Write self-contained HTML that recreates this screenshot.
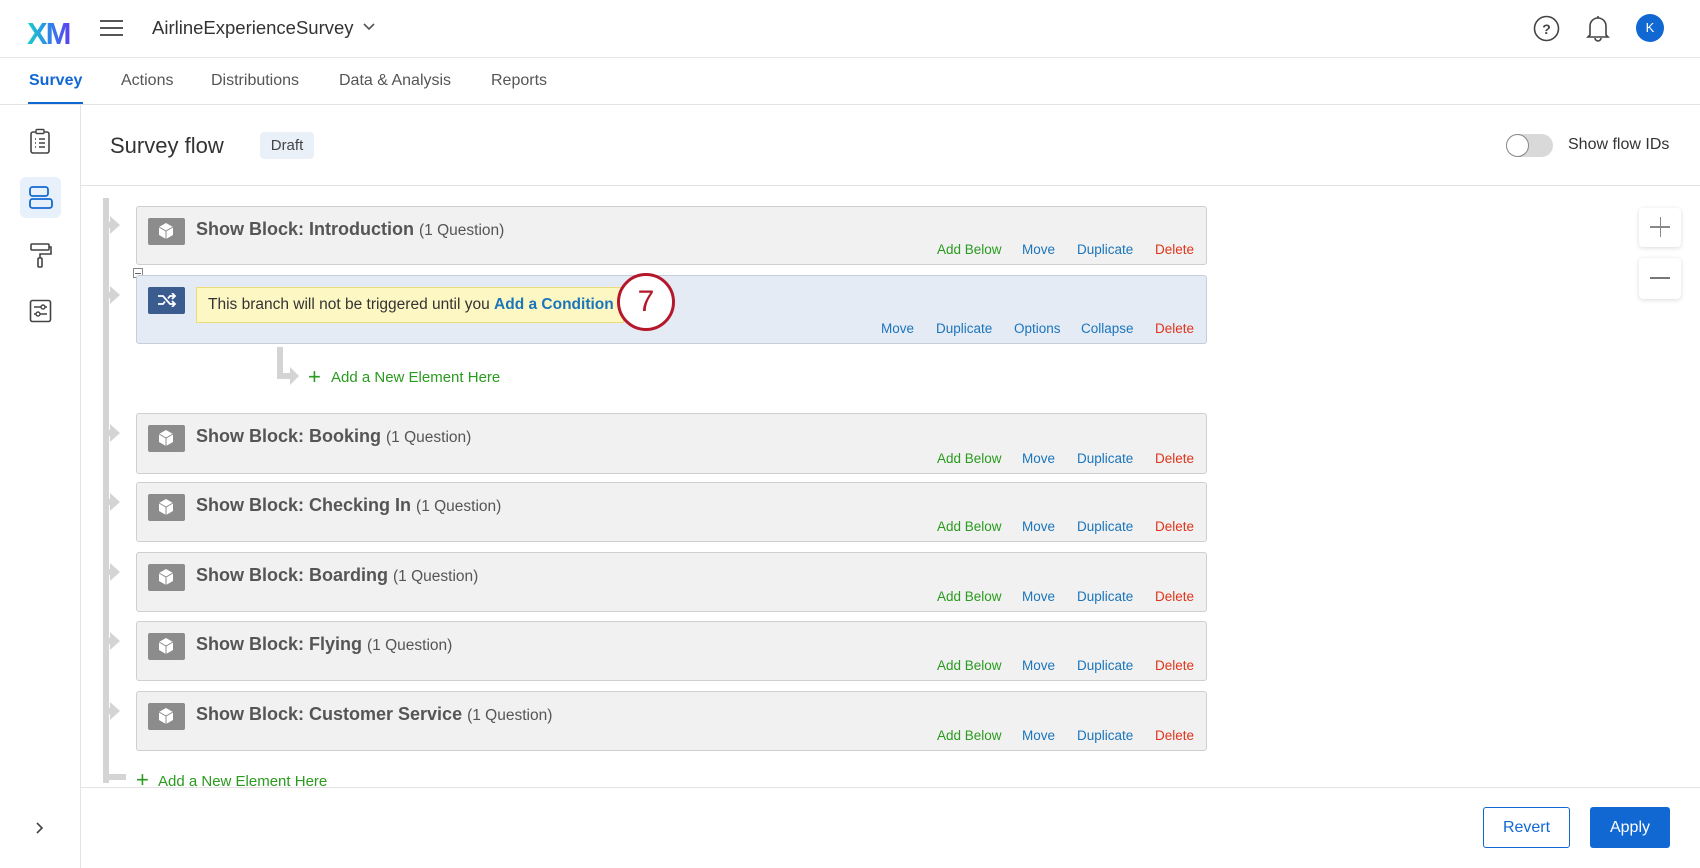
<!DOCTYPE html>
<html><head><meta charset="utf-8"><style>
*{margin:0;padding:0;box-sizing:border-box}
body{width:1700px;height:868px;position:relative;overflow:hidden;background:#fff;font-family:"Liberation Sans",sans-serif;color:#333}
.a{position:absolute}
.tab{position:absolute;top:72px;font-size:16px;color:#555}
.blk{position:absolute;left:136px;width:1071px;background:#f1f1f1;border:1px solid #cfcfcf;border-radius:3px}
.ico{position:absolute;left:11px;top:11px;width:37px;height:27px;background:#8c8c8c;border-radius:2px}
.ttl{position:absolute;left:59px;top:12px;font-size:18px;font-weight:bold;color:#555;white-space:nowrap}
.ttl span{font-weight:normal;font-size:15.5px}
.act{position:absolute;bottom:7px;font-size:13.5px;color:#1b75bb}
.g{color:#2a9b1e}.r{color:#e0341a}
.arr{position:absolute;left:110px;width:0;height:0;border-top:9px solid transparent;border-bottom:9px solid transparent;border-left:10px solid #d4d4d4}
.arl{position:absolute;left:106px;width:6px;height:6px;background:#d4d4d4}
</style></head><body>
<div class="a" style="left:27px;top:16px;font-size:31px;font-weight:bold;letter-spacing:-2px;background:linear-gradient(90deg,#1ad1c5,#2a8fe8 45%,#5b3ff0);-webkit-background-clip:text;color:transparent">XM</div>
<div class="a" style="left:100px;top:20px;width:23px;height:2px;background:#555;box-shadow:0 7px 0 #555,0 14px 0 #555"></div>
<div class="a" style="left:152px;top:17px;font-size:18.5px;color:#333">AirlineExperienceSurvey</div>
<svg class="a" style="left:362px;top:22px" width="14" height="10"><path d="M2 2l5 5 5-5" fill="none" stroke="#555" stroke-width="1.6"/></svg>
<svg class="a" style="left:1533px;top:15px" width="27" height="27"><circle cx="13.5" cy="13.5" r="12" fill="none" stroke="#444" stroke-width="1.6"/><text x="13.5" y="19" font-size="14" font-weight="bold" text-anchor="middle" fill="#444" font-family="Liberation Sans">?</text></svg>
<svg class="a" style="left:1586px;top:14px" width="24" height="28"><path d="M4 21V12a8 8 0 0 1 16 0v9l2 2H2z M12 2v2 M9 24a3 3 0 0 0 6 0" fill="none" stroke="#444" stroke-width="1.6"/></svg>
<div class="a" style="left:1636px;top:14px;width:28px;height:28px;border-radius:50%;background:#1268d3;color:#fff;font-size:13px;text-align:center;line-height:28px">K</div>
<div class="a" style="left:0;top:57px;width:1700px;height:1px;background:#e6e6e6"></div>
<div class="tab" style="left:29px;color:#1268d3;font-weight:bold">Survey</div>
<div class="tab" style="left:121px">Actions</div>
<div class="tab" style="left:211px">Distributions</div>
<div class="tab" style="left:339px">Data &amp; Analysis</div>
<div class="tab" style="left:491px">Reports</div>
<div class="a" style="left:28px;top:102px;width:55px;height:3px;background:#1268d3"></div>
<div class="a" style="left:0;top:104px;width:1700px;height:1px;background:#e3e3e3"></div>
<div class="a" style="left:80px;top:105px;width:1px;height:763px;background:#e3e3e3"></div>
<svg class="a" style="left:29px;top:128px" width="22" height="27"><rect x="2" y="4" width="18" height="21" rx="2" fill="none" stroke="#444" stroke-width="1.6"/><rect x="7" y="1.5" width="8" height="4" rx="1" fill="#fff" stroke="#444" stroke-width="1.4"/><path d="M6 11h1M10 11h6M6 15h1M10 15h6M6 19h1M10 19h6" stroke="#444" stroke-width="1.5"/></svg>
<div class="a" style="left:20px;top:177px;width:41px;height:41px;border-radius:6px;background:#e8f0fb"></div>
<svg class="a" style="left:28px;top:185px" width="26" height="26"><rect x="2" y="2" width="18" height="9" rx="2.5" fill="none" stroke="#1268d3" stroke-width="1.8"/><rect x="2" y="14" width="22" height="9" rx="2.5" fill="none" stroke="#1268d3" stroke-width="1.8"/></svg>
<svg class="a" style="left:29px;top:242px" width="24" height="28"><rect x="2" y="2" width="18" height="6" rx="1" fill="none" stroke="#444" stroke-width="1.6"/><path d="M20 5h2v7H11v4" fill="none" stroke="#444" stroke-width="1.6"/><rect x="9" y="16" width="4" height="9" rx="1" fill="none" stroke="#444" stroke-width="1.6"/></svg>
<svg class="a" style="left:29px;top:299px" width="23" height="24"><rect x="1.5" y="1.5" width="20" height="21" rx="2" fill="none" stroke="#444" stroke-width="1.6"/><path d="M5 8h13M5 15h13" stroke="#444" stroke-width="1.4"/><circle cx="14" cy="8" r="2" fill="#fff" stroke="#444" stroke-width="1.4"/><circle cx="9" cy="15" r="2" fill="#fff" stroke="#444" stroke-width="1.4"/></svg>
<svg class="a" style="left:35px;top:821px" width="10" height="14"><path d="M2 2l5 5-5 5" fill="none" stroke="#444" stroke-width="1.6"/></svg>
<div class="a" style="left:110px;top:133px;font-size:22px;color:#333">Survey flow</div>
<div class="a" style="left:260px;top:132px;width:54px;height:27px;background:#eaf0f8;border-radius:4px;font-size:15px;color:#444;text-align:center;line-height:27px">Draft</div>
<div class="a" style="left:1506px;top:134px;width:47px;height:23px;border-radius:12px;background:#d9d9d9"></div>
<div class="a" style="left:1506px;top:134px;width:23px;height:23px;border-radius:50%;background:#fff;border:1px solid #888"></div>
<div class="a" style="left:1568px;top:136px;font-size:16px;color:#333">Show flow IDs</div>
<div class="a" style="left:81px;top:185px;width:1619px;height:1px;background:#e3e3e3"></div>
<div class="a" style="left:1639px;top:208px;width:42px;height:39px;background:#fff;border-radius:4px;box-shadow:0 1px 5px rgba(0,0,0,.15)"></div>
<div class="a" style="left:1650px;top:226px;width:20px;height:1.5px;background:#888"></div>
<div class="a" style="left:1659.5px;top:217px;width:1.5px;height:20px;background:#888"></div>
<div class="a" style="left:1639px;top:258px;width:42px;height:41px;background:#fff;border-radius:4px;box-shadow:0 1px 5px rgba(0,0,0,.15)"></div>
<div class="a" style="left:1650px;top:277px;width:20px;height:2px;background:#777"></div>
<div class="a" style="left:103px;top:198px;width:6px;height:585px;background:#d4d4d4"></div>
<div class="arl" style="top:222px"></div><div class="arr" style="top:216px"></div>
<div class="arl" style="top:292px"></div><div class="arr" style="top:286px"></div>
<div class="arl" style="top:430px"></div><div class="arr" style="top:424px"></div>
<div class="arl" style="top:499px"></div><div class="arr" style="top:493px"></div>
<div class="arl" style="top:569px"></div><div class="arr" style="top:563px"></div>
<div class="arl" style="top:638px"></div><div class="arr" style="top:632px"></div>
<div class="arl" style="top:708px"></div><div class="arr" style="top:702px"></div>
<div class="arl" style="top:774px;width:20px"></div>
<div class="blk" style="top:206px;height:59px"><div class="ico"></div><div class="ttl">Show Block: Introduction <span>(1 Question)</span></div>
<div class="act g" style="left:800px">Add Below</div><div class="act" style="left:885px">Move</div><div class="act" style="left:940px">Duplicate</div><div class="act r" style="left:1018px">Delete</div></div>
<div class="a" style="left:133px;top:268px;width:10px;height:10px;border:1px solid #888;background:#fff"></div><div class="a" style="left:135px;top:272.5px;width:6px;height:1px;background:#666"></div>
<div class="blk" style="top:275px;height:69px;background:#e5ebf5;border-color:#c5cedb">
<div class="ico" style="background:#3a5c8f"></div>
<svg class="a" style="left:20px;top:17px" width="20" height="14"><path d="M1 3h5l7 8h5M1 11h5l2-2.5M11 5.5l2-2.5h5M15 0l3 3-3 3M15 8l3 3-3 3" fill="none" stroke="#fff" stroke-width="1.8"/></svg>
<div class="a" style="left:59px;top:11px;width:428px;height:36px;background:#fdf7c3;border:1px solid #eddc7a;font-size:15.5px;color:#333;line-height:34px;padding-left:11px;white-space:nowrap">This branch will not be triggered until you <b style="color:#1b75bb">Add a Condition</b></div>
<div class="act" style="left:744px">Move</div><div class="act" style="left:799px">Duplicate</div><div class="act" style="left:877px">Options</div><div class="act" style="left:944px">Collapse</div><div class="act r" style="left:1018px">Delete</div></div>
<div class="a" style="left:617px;top:273px;width:58px;height:58px;border-radius:50%;border:3px solid #b5172b;background:#fff;font-size:30px;color:#b5172b;text-align:center;line-height:52px">7</div>
<div class="a" style="left:277px;top:347px;width:6px;height:30px;background:#d4d4d4"></div>
<div class="a" style="left:277px;top:373px;width:14px;height:6px;background:#d4d4d4"></div>
<div class="a" style="left:290px;top:367px;border-top:9px solid transparent;border-bottom:9px solid transparent;border-left:9px solid #d4d4d4"></div>
<div class="a" style="left:308px;top:368px;font-size:22px;color:#2a9b1e;line-height:18px">+</div>
<div class="a" style="left:331px;top:369px;font-size:15px;color:#2a9b1e">Add a New Element Here</div>
<div class="blk" style="top:413px;height:61px"><div class="ico"></div><div class="ttl">Show Block: Booking <span>(1 Question)</span></div>
<div class="act g" style="left:800px">Add Below</div><div class="act" style="left:885px">Move</div><div class="act" style="left:940px">Duplicate</div><div class="act r" style="left:1018px">Delete</div></div>
<div class="blk" style="top:482px;height:60px"><div class="ico"></div><div class="ttl">Show Block: Checking In <span>(1 Question)</span></div>
<div class="act g" style="left:800px">Add Below</div><div class="act" style="left:885px">Move</div><div class="act" style="left:940px">Duplicate</div><div class="act r" style="left:1018px">Delete</div></div>
<div class="blk" style="top:552px;height:60px"><div class="ico"></div><div class="ttl">Show Block: Boarding <span>(1 Question)</span></div>
<div class="act g" style="left:800px">Add Below</div><div class="act" style="left:885px">Move</div><div class="act" style="left:940px">Duplicate</div><div class="act r" style="left:1018px">Delete</div></div>
<div class="blk" style="top:621px;height:60px"><div class="ico"></div><div class="ttl">Show Block: Flying <span>(1 Question)</span></div>
<div class="act g" style="left:800px">Add Below</div><div class="act" style="left:885px">Move</div><div class="act" style="left:940px">Duplicate</div><div class="act r" style="left:1018px">Delete</div></div>
<div class="blk" style="top:691px;height:60px"><div class="ico"></div><div class="ttl">Show Block: Customer Service <span>(1 Question)</span></div>
<div class="act g" style="left:800px">Add Below</div><div class="act" style="left:885px">Move</div><div class="act" style="left:940px">Duplicate</div><div class="act r" style="left:1018px">Delete</div></div>
<div class="a" style="left:136px;top:771px;font-size:22px;color:#2a9b1e;line-height:18px">+</div>
<div class="a" style="left:158px;top:773px;font-size:15px;color:#2a9b1e">Add a New Element Here</div>
<div class="a" style="left:81px;top:787px;width:1619px;height:81px;background:#fff;border-top:1px solid #e3e3e3"></div>
<div class="a" style="left:1483px;top:807px;width:87px;height:41px;border:1px solid #1268d3;border-radius:3px;color:#1268d3;font-size:16px;text-align:center;line-height:39px">Revert</div>
<div class="a" style="left:1590px;top:807px;width:80px;height:41px;background:#1268d3;border-radius:3px;color:#fff;font-size:16px;text-align:center;line-height:41px">Apply</div>
<svg width="0" height="0" style="position:absolute"><defs><g id="cube"><path d="M9 1l7 4v8l-7 4-7-4V5z" fill="#fff"/><path d="M2 5l7 4 7-4M9 9v8" stroke="#8c8c8c" stroke-width="1" fill="none"/></g></defs></svg>
<svg class="a" style="left:157px;top:222px" width="18" height="18"><use href="#cube"/></svg>
<svg class="a" style="left:157px;top:429px" width="18" height="18"><use href="#cube"/></svg>
<svg class="a" style="left:157px;top:498px" width="18" height="18"><use href="#cube"/></svg>
<svg class="a" style="left:157px;top:568px" width="18" height="18"><use href="#cube"/></svg>
<svg class="a" style="left:157px;top:637px" width="18" height="18"><use href="#cube"/></svg>
<svg class="a" style="left:157px;top:707px" width="18" height="18"><use href="#cube"/></svg>
</body></html>
